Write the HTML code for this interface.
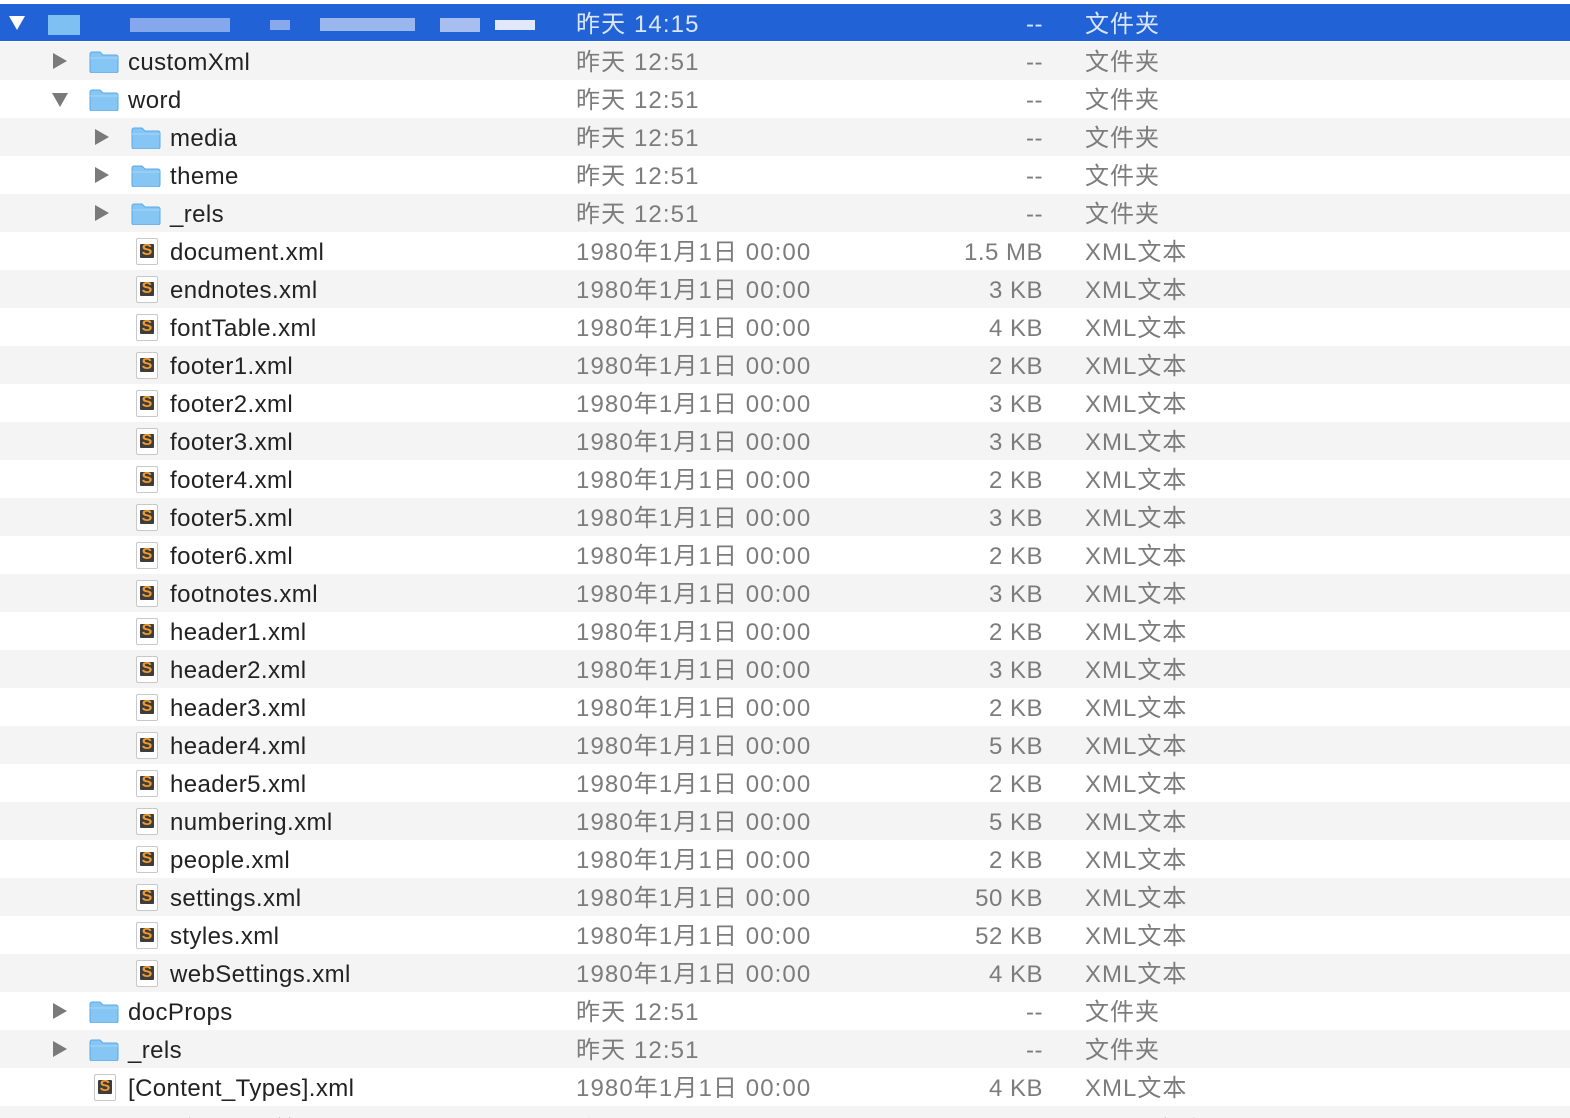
<!DOCTYPE html>
<html style="overflow:hidden"><head><meta charset="utf-8"><style>
html,body{margin:0;width:1570px;height:1118px;overflow:hidden;background:#fff;font-family:"Liberation Sans","Noto Sans CJK SC",sans-serif;}
.r{position:absolute;left:0;width:1570px;height:38px;font-size:24px;line-height:38px;}
.g{background:#f4f4f4}
.r span{position:absolute;white-space:nowrap;top:2px}
.n{color:#222;letter-spacing:0.4px}
.d{left:576px;color:#7c7c7c;letter-spacing:1.1px}
.s{right:527px;color:#7c7c7c;text-align:right;letter-spacing:0.5px}
.k{left:1085px;color:#7c7c7c;letter-spacing:1px}
.tri{position:absolute;width:0;height:0}
.tr{border-top:8px solid transparent;border-bottom:8px solid transparent;border-left:14px solid #7a7a7a;top:11px}
.td{border-left:8px solid transparent;border-right:8px solid transparent;border-top:14px solid #7a7a7a;top:13px}
.fold{position:absolute;top:9px;width:30px;height:22px}
.doc{position:absolute;top:6px;width:22px;height:27px;background:#fff;border:1px solid #c8c8c8;border-radius:2px;box-sizing:border-box}
.doc i{position:absolute;left:3px;top:5px;width:14px;height:14px;background:#3d3d3d;border-radius:1px;color:#f39a2c;font:bold 16px/14px "Liberation Sans",sans-serif;text-align:center;font-style:normal}
</style></head><body>
<div class="r" style="top:4px;height:37px;background:#2163d7">
<div class="tri" style="left:9px;top:12px;border-left:8px solid transparent;border-right:8px solid transparent;border-top:14px solid #fff"></div>
<div style="position:absolute;left:48px;top:11px;width:32px;height:20px;background:#7ec0f2"></div>
<div style="position:absolute;left:130px;top:14px;width:100px;height:14px;background:#9fb8f0;opacity:.8"></div>
<div style="position:absolute;left:270px;top:16px;width:20px;height:10px;background:#8aa8ec"></div>
<div style="position:absolute;left:320px;top:14px;width:95px;height:13px;background:#b8cbf2;opacity:.8"></div>
<div style="position:absolute;left:440px;top:14px;width:40px;height:14px;background:#a8bef0"></div>
<div style="position:absolute;left:495px;top:16px;width:40px;height:10px;background:#e0e8fa"></div>
<span class="d" style="color:#dbe6fb">昨天 14:15</span><span class="s" style="color:#dbe6fb">--</span><span class="k" style="color:#dbe6fb">文件夹</span></div>
<div id="rows"></div>
<script>
var R=[["f",0,"customXml","昨天 12:51","--","文件夹"],["o",0,"word","昨天 12:51","--","文件夹"],["f",1,"media"],["f",1,"theme"],["f",1,"_rels"]];
var x=[["document.xml","1.5 MB"],["endnotes.xml","3 KB"],["fontTable.xml","4 KB"],["footer1.xml","2 KB"],["footer2.xml","3 KB"],["footer3.xml","3 KB"],["footer4.xml","2 KB"],["footer5.xml","3 KB"],["footer6.xml","2 KB"],["footnotes.xml","3 KB"],["header1.xml","2 KB"],["header2.xml","3 KB"],["header3.xml","2 KB"],["header4.xml","5 KB"],["header5.xml","2 KB"],["numbering.xml","5 KB"],["people.xml","2 KB"],["settings.xml","50 KB"],["styles.xml","52 KB"],["webSettings.xml","4 KB"]];
x.forEach(function(a){R.push(["x",1,a[0],"1980年1月1日 00:00",a[1],"XML文本"])});
R.push(["f",0,"docProps"],["f",0,"_rels"],["x",0,"[Content_Types].xml","1980年1月1日 00:00","4 KB","XML文本"]);
var h="";
var fsvg='<svg class="fold" viewBox="0 0 30 22" style="left:LEFTpx"><path d="M1 3a2 2 0 0 1 2-2h8l3 3h13a2 2 0 0 1 2 2v14a2 2 0 0 1-2 2H3a2 2 0 0 1-2-2z" fill="#86c6f4" stroke="#5aa8e6" stroke-width="1"/><path d="M1 7h28" stroke="#a9d7f8" stroke-width="1"/></svg>';
R.forEach(function(a,i){
 var top=42+38*i, ind=a[1]*42;
 h+='<div class="r'+(i%2==0?' g':'')+'" style="top:'+top+'px">';
 if(a[0]=="f")h+='<div class="tri tr" style="left:'+(53+ind)+'px"></div>';
 if(a[0]=="o")h+='<div class="tri td" style="left:'+(52+ind)+'px"></div>';
 if(a[0]=="x")h+='<div class="doc" style="left:'+(94+ind)+'px"><i>S</i></div>';
 else h+=fsvg.replace("LEFT",89+ind);
 h+='<span class="n" style="left:'+(128+ind)+'px">'+a[2]+'</span><span class="d">'+(a[3]||"昨天 12:51")+'</span><span class="s">'+(a[4]||"--")+'</span><span class="k">'+(a[5]||"文件夹")+'</span></div>';
});
h+='<div class="r g" style="top:1106px;overflow:hidden;height:12px"><span class="n" style="left:86px;top:6px">2... 【某合同】 - 首 - 201912 1 ...</span><span class="d" style="top:6px">昨天 12:18</span><span class="s" style="top:6px">380 KB</span><span class="k" style="top:6px">Word 文稿</span></div>';
document.getElementById("rows").innerHTML=h;
</script>
</body></html>
